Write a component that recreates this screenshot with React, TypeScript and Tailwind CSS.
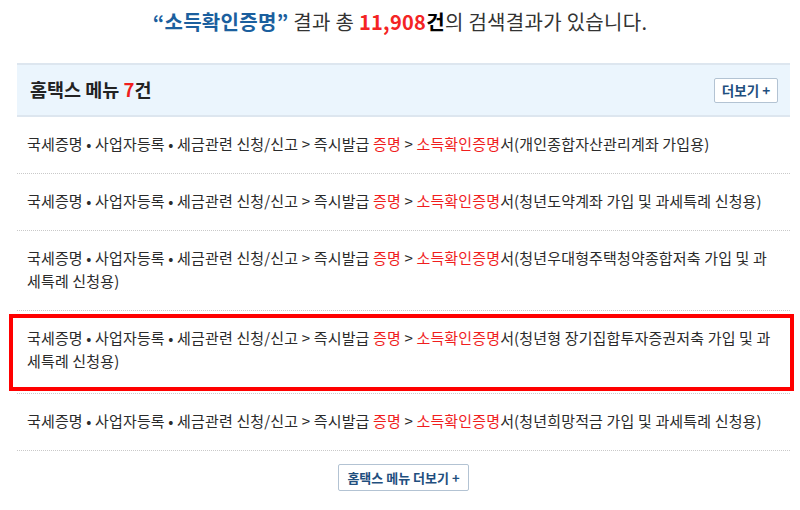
import { Fragment } from "react"

const ROWS = [
  "개인종합자산관리계좌 가입용",
  "청년도약계좌 가입 및 과세특례 신청용",
  "청년우대형주택청약종합저축 가입 및 과세특례 신청용",
  "청년형 장기집합투자증권저축 가입 및 과세특례 신청용",
  "청년희망적금 가입 및 과세특례 신청용",
]

const HIGHLIGHT = 3

function MenuRow({ detail, highlight }: { detail: string; highlight: boolean }) {
  return (
    <li
      className={
        "relative border-b border-dotted border-[#c9c9c9] pl-[10px] pr-[18px] pt-[15px] text-[15px] leading-[23px] tracking-[0.15px] text-[#2b2b2b] " +
        (highlight ? "pb-[21px]" : "pb-[18px]")
      }
    >
      <span>국세증명 • 사업자등록 • 세금관련 신청/신고 &gt; 즉시발급 </span>
      <span className="text-[#f01e1e]">증명</span>
      <span> &gt; </span>
      <span className="text-[#f01e1e]">소득확인증명</span>
      <span>서({detail})</span>
      {highlight && (
        <div className="pointer-events-none absolute -left-[8px] -right-[4px] top-[3px] bottom-[2px] border-[4px] border-[#ff0000]" />
      )}
    </li>
  )
}

export default function App() {
  return (
    <div
      className="h-[510px] w-[800px] bg-white"
      style={{ fontFamily: '"Noto Sans CJK KR", "Noto Sans", sans-serif' }}
    >
      <h1 className="pt-[8px] text-center text-[20px] leading-[28px] tracking-[0.3px] text-[#333]">
        <span className="font-bold text-[#1b5f9e]">“소득확인증명”</span> 결과 총{" "}
        <span className="font-bold text-[#f42424]">11,908</span>
        <span className="font-bold text-black">건</span>의 검색결과가 있습니다.
      </h1>

      <section className="ml-[17px] mt-[27px] w-[773px]">
        <div className="flex h-[54px] items-center justify-between border-y-2 border-[#dde6ef] bg-[#ebf5fd] pl-[13px] pr-[12px]">
          <h2 className="text-[18.5px] font-bold text-[#222]">
            홈택스 메뉴 <span className="text-[#f01e1e]">7</span>건
          </h2>
          <button className="h-[25px] w-[64px] rounded-[2px] border border-[#b3c3d3] bg-white text-[13.5px] font-bold text-[#1f4f7e]">
            더보기 +
          </button>
        </div>

        <ul>
          {ROWS.map((detail, i) => (
            <Fragment key={detail}>
              <MenuRow detail={detail} highlight={i === HIGHLIGHT} />
            </Fragment>
          ))}
        </ul>

        <div className="flex justify-center pt-[13px]">
          <button className="h-[27px] w-[131px] rounded-[2px] border border-[#b3c3d3] bg-white text-[13px] font-bold text-[#1f4f7e]">
            홈택스 메뉴 더보기 +
          </button>
        </div>
      </section>
    </div>
  )
}
